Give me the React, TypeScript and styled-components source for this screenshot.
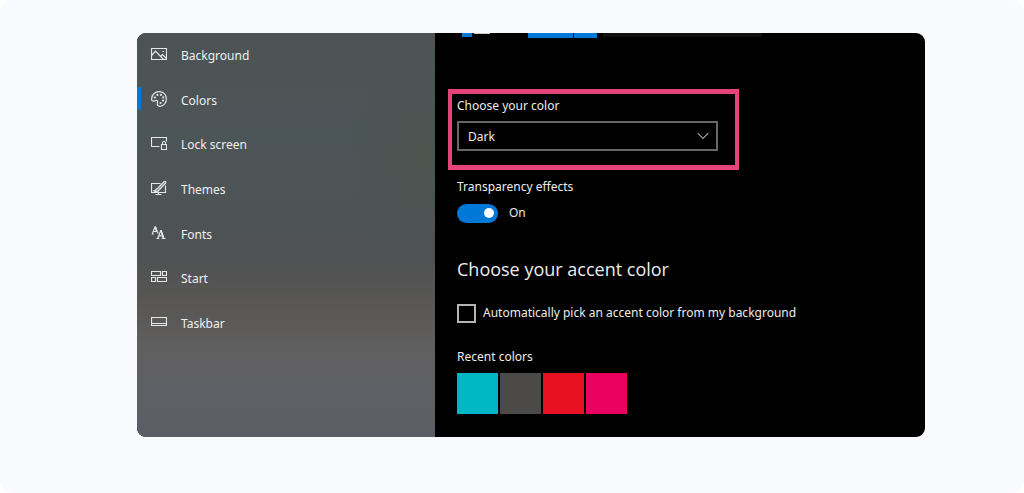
import React, { useState } from "react";
import styled, { createGlobalStyle } from "styled-components";

const GlobalStyle = createGlobalStyle`
  *, *::before, *::after { box-sizing: border-box; }
  body {
    margin: 0;
    background: #ffffff;
    color: #ececec;
    font-family: "Noto Sans", "Open Sans", sans-serif;
    font-size: 12px;
    line-height: 22px;
  }
`;

const Page = styled.div`
  min-height: 100vh;
  display: flex;
  padding: 33px 99px 56px 137px;
  border-radius: 12px;
  background: #f8fafd;
`;

const Window = styled.div`
  flex: 1;
  display: grid;
  grid-template-columns: minmax(160px, 298fr) minmax(0, 490fr);
  border-radius: 9px;
  overflow: hidden;
  background: #000000;
`;

const Sidebar = styled.aside`
  padding-top: 1px;
  background:
    radial-gradient(ellipse 80px 110px at 96% 30%, rgba(74, 84, 76, 0.7), rgba(74, 84, 76, 0)),
    linear-gradient(180deg, #4d5355 0%, #4c5557 25%, #4d5456 42%, #505152 56%, #585756 67%, #605f5f 78%, #5f6064 87%, #5b5e65 100%);
`;

const Nav = styled.nav`
  display: grid;
  grid-auto-rows: 1fr;
  min-height: 312px;
`;

const NavLink = styled.a<{ $active?: boolean }>`
  display: flex;
  align-items: center;
  gap: 14px;
  color: #eef0f0;
  text-decoration: none;

  &::before {
    content: "";
    width: 4px;
    height: 23px;
    margin: 0 -4px 4px 0;
    background: ${(p) => (p.$active ? "#0078d7" : "transparent")};
  }
`;

const NavIcon = styled.svg`
  width: 16px;
  height: 16px;
  margin-bottom: 4px;
  fill: none;
  stroke: #e4e7e7;
  stroke-width: 1.15;
`;

const Content = styled.main`
  padding: 0 22px 23px;
`;

const Preview = styled.div`
  display: flex;
  align-items: flex-start;
  height: 5px;
  padding-left: 5px;
`;

const PreviewBlock = styled.span<{ $width: number; $height: number; $color: string; $gap: number }>`
  width: ${(p) => p.$width}px;
  height: ${(p) => p.$height}px;
  margin-right: ${(p) => p.$gap}px;
  background: ${(p) => p.$color};
`;

const Highlight = styled.section`
  max-width: 291px;
  margin: 51px 0 0 -9px;
  padding: 1px 17px 14px 5px;
  border: solid #e5447b;
  border-width: 5px 4px;
`;

const Label = styled.label`
  display: block;
  margin-bottom: 4px;
`;

const SelectBox = styled.div`
  display: grid;
  align-items: center;

  > * { grid-area: 1 / 1; }
`;

const Select = styled.select`
  appearance: none;
  width: 100%;
  height: 30px;
  padding: 1px 30px 0 9px;
  border: 2px solid #666666;
  border-radius: 0;
  background: #000000;
  color: inherit;
  font: inherit;
`;

const Chevron = styled.svg`
  justify-self: end;
  width: 12px;
  height: 8px;
  margin-right: 9px;
  fill: none;
  stroke: #a0a0a0;
  stroke-width: 1.2;
  pointer-events: none;
`;

const Field = styled.section`
  margin-top: 6px;
`;

const Row = styled.label`
  display: flex;
  align-items: center;
`;

const Toggle = styled.input`
  appearance: none;
  display: flex;
  align-items: center;
  justify-content: flex-start;
  width: 41px;
  height: 19px;
  margin: 0 11px 0 0;
  padding: 0 4px;
  border-radius: 10px;
  background: #555555;

  &::before {
    content: "";
    width: 10px;
    height: 10px;
    border-radius: 50%;
    background: #ffffff;
  }

  &:checked {
    justify-content: flex-end;
    background: #0078d7;
  }
`;

const Heading = styled.h2`
  margin: 31px 0 19px;
  font-family: "Open Sans", "Noto Sans", sans-serif;
  font-size: 18px;
  font-weight: 400;
  line-height: 28px;
`;

const Checkbox = styled.input`
  appearance: none;
  width: 19px;
  height: 19px;
  margin: 0 7px 0 0;
  border: 2px solid #b4b4b4;
  background: #000000;

  &:checked { background: #0078d7; }
`;

const Recent = styled.section`
  margin-top: 22px;
`;

const RecentTitle = styled.h3`
  margin: 0 0 5px;
  font-size: inherit;
  font-weight: 400;
`;

const Swatches = styled.div`
  display: flex;
  gap: 2px;
`;

const Swatch = styled.button<{ $color: string }>`
  width: 41px;
  height: 41px;
  padding: 0;
  border: 0;
  background: ${(p) => p.$color};
`;

const navItems: { label: string; icon: React.ReactNode }[] = [
  {
    label: "Background",
    icon: (
      <>
        <path d="M.5 2.500h15v11H.5z" />
        <path d="M.5 9.500 4.500 5l8 8.500M9.500 10.500l2-2 4 4" />
        <path d="M11.500 5.500h1.500" />
      </>
    ),
  },
  {
    label: "Colors",
    icon: (
      <>
        <path d="M8.200.6c4.100 0 7.200 3.100 7.200 7.200 0 4.300-2.900 7.500-6.600 7.500-1.700 0-2.600-.9-2.600-2.200 0-1.100.5-1.700.5-2.500S6 9.300 5.200 9.300c-.9 0-1.500.8-2.700.8C1.200 10.100.6 9.200.6 7.900.6 3.800 4.100.6 8.200.6z" />
        <g fill="#e4e7e7" stroke="none">
          <circle cx="3.900" cy="6.500" r="1.100" />
          <circle cx="6.500" cy="3.900" r="1.100" />
          <circle cx="10" cy="3.900" r="1.100" />
          <circle cx="12.300" cy="6.400" r="1.100" />
          <circle cx="12" cy="9.600" r="1.100" />
          <circle cx="9.500" cy="12" r="1.100" />
        </g>
      </>
    ),
  },
  {
    label: "Lock screen",
    icon: (
      <>
        <path d="M8.500 11.500H.5v-9h15v4" />
        <path d="M10.500 9.500h5v5h-5zM11.500 9.500v-1.500a1.500 1.500 0 0 1 3 0v1.500" />
      </>
    ),
  },
  {
    label: "Themes",
    icon: (
      <>
        <path d="M9.500 3.500h-9v9h14v-7" />
        <path d="M7.500 12.500v2M4.500 14.500h6" />
        <path
          fill="#8f9494"
          d="M6.300 8.600 13 1.700c.5-.5 1.200-.5 1.600-.1s.4 1 0 1.500L8.100 10.200c-.6 1.500-3.100 1.700-5.100.7 1.800-.5 2-2.300 3.300-2.300z"
        />
      </>
    ),
  },
  {
    label: "Fonts",
    icon: (
      <>
        <path d="M1.300 9 4 1.800h.4L7 8.500M2.400 6.500h3.300M.8 9h1.800" />
        <path d="M5.500 13.500h2.700M10.800 13.500h3.700M6.800 13.500 9.600 5.500h.5l2.800 8M8 10.800h4" />
        <path d="m9.900 5.500 2.700 8M4.200 2l1.500 4" strokeWidth="1.700" />
      </>
    ),
  },
  {
    label: "Start",
    icon: <path d="M.5 2.500h9v4h-9zM11.500 2.500h4v4h-4zM.5 8.500h4v4h-4zM6.500 8.500h9v4h-9z" />,
  },
  {
    label: "Taskbar",
    icon: <path d="M.5 3.500h15v8H.5zM.5 9.500h15" />,
  },
];

const recentColors = [
  { name: "Teal", value: "#00b7c3" },
  { name: "Gray", value: "#4c4a48" },
  { name: "Red", value: "#e81123" },
  { name: "Pink", value: "#ea005e" },
];

export default function App() {
  const [transparent, setTransparent] = useState(true);

  return (
    <>
      <GlobalStyle />
      <Page>
        <Window>
          <Sidebar>
            <Nav>
              {navItems.map((item) => (
                <NavLink key={item.label} href="#" $active={item.label === "Colors"}>
                  <NavIcon viewBox="0 0 16 16" aria-hidden="true">
                    {item.icon}
                  </NavIcon>
                  {item.label}
                </NavLink>
              ))}
            </Nav>
          </Sidebar>
          <Content>
            <Preview>
              <PreviewBlock $width={10} $height={4} $gap={2} $color="#0078d7" />
              <PreviewBlock $width={16} $height={1} $gap={38} $color="#c8c8c8" />
              <PreviewBlock $width={45} $height={5} $gap={1} $color="#0078d7" />
              <PreviewBlock $width={23} $height={5} $gap={6} $color="#0078d7" />
              <PreviewBlock $width={159} $height={4} $gap={0} $color="#101010" />
            </Preview>
            <Highlight>
              <Label htmlFor="mode">Choose your color</Label>
              <SelectBox>
                <Select id="mode" defaultValue="Dark">
                  <option>Light</option>
                  <option>Dark</option>
                  <option>Custom</option>
                </Select>
                <Chevron viewBox="0 0 12 8" aria-hidden="true">
                  <path d="m.7 1.200 5.300 5.300 5.300-5.300" />
                </Chevron>
              </SelectBox>
            </Highlight>
            <Field>
              <Label htmlFor="transparency">Transparency effects</Label>
              <Row>
                <Toggle
                  id="transparency"
                  type="checkbox"
                  role="switch"
                  checked={transparent}
                  onChange={(e) => setTransparent(e.target.checked)}
                />
                {transparent ? "On" : "Off"}
              </Row>
            </Field>
            <Heading>Choose your accent color</Heading>
            <Row>
              <Checkbox type="checkbox" />
              Automatically pick an accent color from my background
            </Row>
            <Recent>
              <RecentTitle>Recent colors</RecentTitle>
              <Swatches>
                {recentColors.map((c) => (
                  <Swatch key={c.name} type="button" aria-label={c.name} $color={c.value} />
                ))}
              </Swatches>
            </Recent>
          </Content>
        </Window>
      </Page>
    </>
  );
}
